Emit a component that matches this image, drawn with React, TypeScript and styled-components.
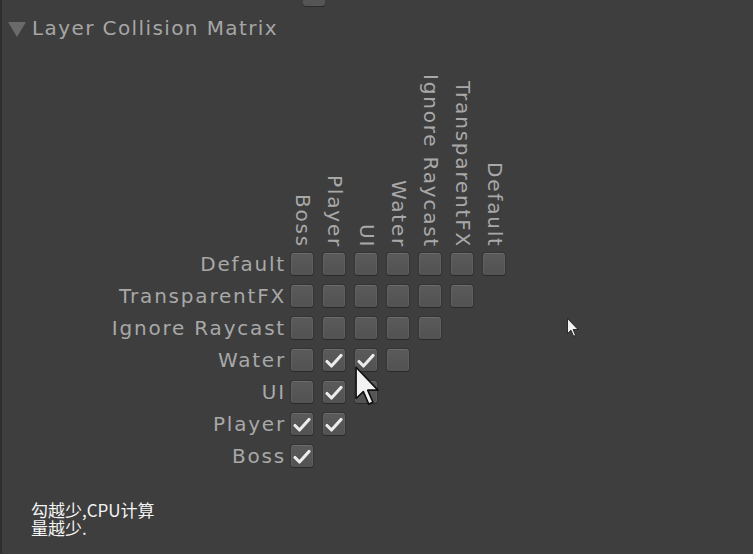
import React from "react";
import styled, { createGlobalStyle } from "styled-components";

const GlobalStyle = createGlobalStyle`
  html, body {
    margin: 0;
    padding: 0;
    background: #3e3e3e;
  }
  body {
    font-family: "DejaVu Sans", "Liberation Sans", sans-serif;
  }
`;

const Page = styled.div`
  position: relative;
  width: 753px;
  height: 554px;
  overflow: hidden;
  background: #3e3e3e;
  border-left: 2px solid #2f2f2f;
  box-sizing: border-box;
`;

const TopStub = styled.div`
  height: 6px;
  display: flex;
  align-items: flex-end;
  padding-left: 301px;
`;

const StubBox = styled.div`
  width: 22px;
  height: 6px;
  border-radius: 0 0 3px 3px;
  background: #555555;
  box-shadow: 0 1px 0 #2c2c2c;
`;

const Header = styled.div`
  display: flex;
  align-items: center;
  gap: 6px;
  height: 44px;
  padding-left: 6px;
  color: #a6a6a6;
  font-size: 20px;
  letter-spacing: 1.4px;
`;

const Triangle = styled.div`
  width: 0;
  height: 0;
  margin-top: 2px;
  border-left: 9px solid transparent;
  border-right: 9px solid transparent;
  border-top: 15px solid #6a6a6a;
`;

const Matrix = styled.div`
  display: flex;
  flex-direction: column;
  margin-top: 4px;
`;

const HeaderRow = styled.div`
  display: flex;
  align-items: flex-end;
  height: 194px;
  padding-left: 285px;
`;

const ColLabel = styled.div`
  width: 32px;
  display: flex;
  justify-content: center;
  writing-mode: vertical-rl;
  color: #a8a8a8;
  font-size: 20px;
  letter-spacing: 1.8px;
  line-height: 32px;
  white-space: nowrap;
`;

const Row = styled.div`
  display: flex;
  align-items: center;
  height: 32px;
`;

const RowLabel = styled.div`
  width: 287px;
  padding-right: 3px;
  box-sizing: border-box;
  text-align: right;
  color: #a8a8a8;
  font-size: 20px;
  letter-spacing: 1.8px;
  white-space: nowrap;
`;

const Cell = styled.div`
  width: 32px;
  height: 32px;
  display: flex;
  align-items: center;
  padding-left: 2px;
  box-sizing: border-box;
`;

const Box = styled.div`
  width: 22px;
  height: 22px;
  border-radius: 3px;
  box-sizing: border-box;
  background: linear-gradient(#5a5a5a, #525252);
  border-top: 1px solid #6c6c6c;
  border-left: 1px solid #606060;
  border-right: 1px solid #606060;
  box-shadow: 0 1px 0 #2a2a2a, 0 0 0 1px #353535;
  display: flex;
  align-items: center;
  justify-content: center;
`;

const Note = styled.div`
  position: absolute;
  left: 29px;
  top: 501px;
  color: #f4f4f4;
  font-family: "Noto Sans CJK SC", "DejaVu Sans", sans-serif;
  font-size: 17px;
  line-height: 18px;
`;

const Cursor = styled.svg`
  position: absolute;
  pointer-events: none;
`;

const cols = ["Boss", "Player", "UI", "Water", "Ignore Raycast", "TransparentFX", "Default"];
const rows = ["Default", "TransparentFX", "Ignore Raycast", "Water", "UI", "Player", "Boss"];

// checked columns per row
const checked: Record<string, number[]> = {
  Water: [1, 2],
  UI: [1],
  Player: [0, 1],
  Boss: [0],
};

const Check = () => (
  <svg width="18" height="16" viewBox="0 0 18 16">
    <path d="M2 8.5 L6.5 13 L16 2.5" fill="none" stroke="#ececec" strokeWidth="3.1" strokeLinecap="round" strokeLinejoin="round" />
  </svg>
);

const Arrow = ({ x, y, w, h }: { x: number; y: number; w: number; h: number }) => (
  <Cursor style={{ left: x, top: y }} width={w} height={h} viewBox="0 0 12 19">
    <path
      d="M0.5 0.5 L0.5 15.5 L4 12.2 L6.6 18.2 L8.6 17.3 L6.1 11.5 L11 11.5 Z"
      fill="#f2f2f2"
      stroke="#111"
      strokeWidth="0.8"
      strokeLinejoin="round"
    />
  </Cursor>
);

export default function App() {
  return (
    <>
      <GlobalStyle />
      <Page>
        <TopStub>
          <StubBox />
        </TopStub>
        <Header>
          <Triangle />
          <span>Layer Collision Matrix</span>
        </Header>
        <Matrix>
          <HeaderRow>
            {cols.map((c) => (
              <ColLabel key={c}>{c}</ColLabel>
            ))}
          </HeaderRow>
          {rows.map((r, i) => (
            <Row key={r}>
              <RowLabel>{r}</RowLabel>
              {cols.slice(0, 7 - i).map((c, j) => (
                <Cell key={c}>
                  <Box>{checked[r]?.includes(j) && <Check />}</Box>
                </Cell>
              ))}
            </Row>
          ))}
        </Matrix>
        <Note>
          勾越少,CPU计算
          <br />
          量越少.
        </Note>
        <Arrow x={353} y={366} w={25} h={40} />
        <Arrow x={565} y={318} w={12} h={19} />
      </Page>
    </>
  );
}
